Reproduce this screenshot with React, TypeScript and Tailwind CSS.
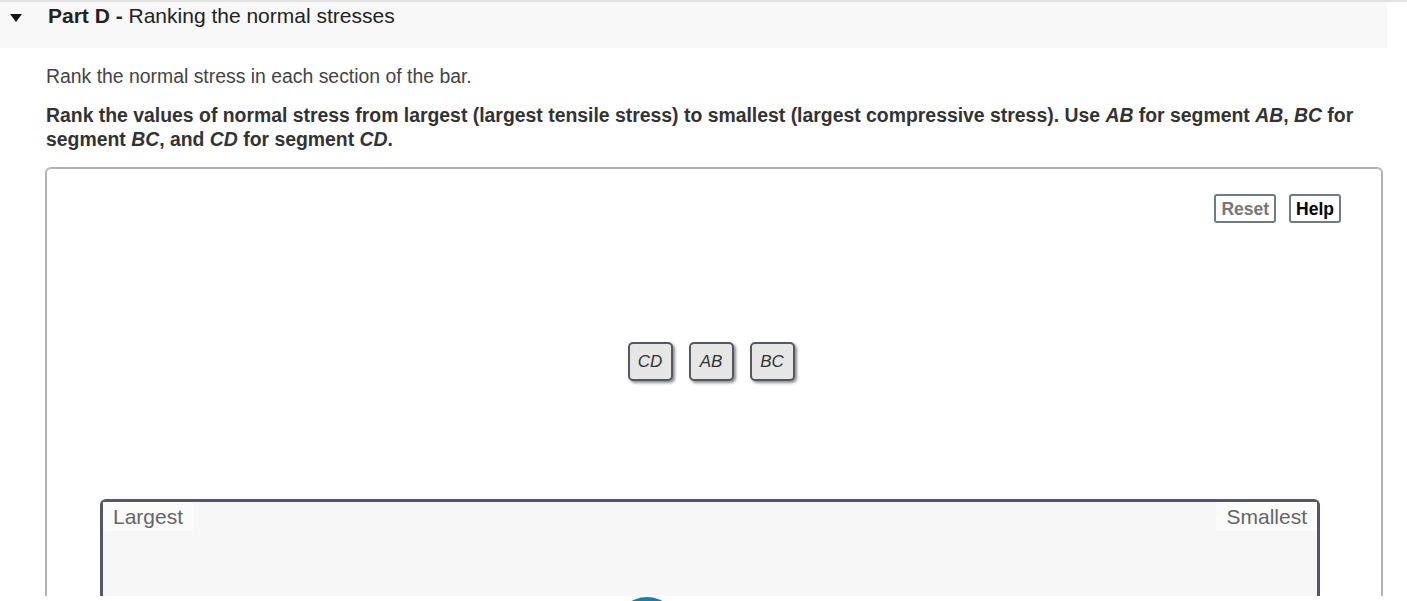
const tiles = ['CD', 'AB', 'BC']

function Tile({ label }: { label: string }) {
  return (
    <div className="flex h-[39px] w-[45px] items-center justify-center rounded-[5px] border-2 border-[#55595f] bg-[#e6e6e6] text-[17px] italic text-[#333] shadow-[2px_2px_3px_rgba(0,0,0,0.45)]">
      {label}
    </div>
  )
}

export default function App() {
  return (
    <div
      className="relative h-[601px] w-[1407px] overflow-hidden bg-white"
      style={{ fontFamily: '"Liberation Sans", Arial, sans-serif' }}
    >
      <div className="h-[596px] overflow-hidden">
        <div className="h-[2px] bg-[#e2e2e2]" />

        {/* section header */}
        <div className="mr-[20px] flex h-[46px] items-start bg-[#f8f8f8] pt-[2px]">
          <svg width="12" height="8" viewBox="0 0 12 8" className="ml-[10px] mt-[10px]">
            <path d="M0 0 L12 0 L6 8 Z" fill="#111" />
          </svg>
          <h2 className="ml-[26px] text-[21px] leading-[24px] text-[#222]">
            <span className="font-bold">Part D - </span>
            Ranking the normal stresses
          </h2>
        </div>

        <div className="pl-[46px] pr-[24px]">
          <p className="mt-[16px] text-[19.4px] leading-[24px] text-[#444]">
            Rank the normal stress in each section of the bar.
          </p>
          <p className="mt-[15px] text-[19.4px] font-bold leading-[24px] text-[#333]">
            Rank the values of normal stress from largest (largest tensile stress) to smallest (largest
            compressive stress). Use <i>AB</i> for segment <i>AB</i>, <i>BC</i> for segment <i>BC</i>, and{' '}
            <i>CD</i> for segment <i>CD</i>.
          </p>

          {/* ranking widget */}
          <div className="mt-[16px] ml-[-1px] h-[500px] rounded-[6px] border-2 border-[#b3b3b3]">
            <div className="flex justify-end gap-[13px] pr-[40px] pt-[25px]">
              <button className="h-[29px] rounded-[3px] border-2 border-[#6f7c80] px-[5px] text-[17.5px] font-bold text-[#777]">
                Reset
              </button>
              <button className="h-[29px] rounded-[3px] border-2 border-[#6f7c80] px-[5px] text-[17.5px] font-bold text-black">
                Help
              </button>
            </div>

            <div className="mt-[119px] flex justify-center gap-[16px] pr-[6px]">
              {tiles.map((t) => (
                <Tile key={t} label={t} />
              ))}
            </div>

            <div className="ml-[53px] mt-[118px] h-[200px] w-[1220px] rounded-t-[6px] border-x-[3px] border-t-[3px] border-[#55556a] bg-[#f7f7f7]">
              <div className="flex justify-between">
                <span className="bg-[#fbfbfb] px-[10px] py-[2px] text-[21px] leading-[25px] text-[#666]">
                  Largest
                </span>
                <span className="bg-[#fbfbfb] px-[10px] py-[2px] text-[21px] leading-[25px] text-[#666]">
                  Smallest
                </span>
              </div>
            </div>
          </div>
        </div>
      </div>

      {/* drop marker peeking from below */}
      <div className="absolute left-[615px] top-[597px] h-[64px] w-[64px] rounded-full bg-[#1a7fa6]" />
    </div>
  )
}
